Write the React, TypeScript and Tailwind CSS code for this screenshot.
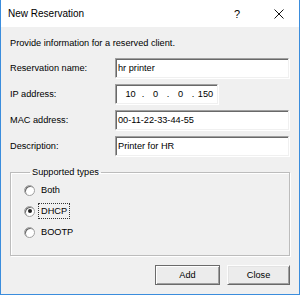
import React from "react";

const inputCls =
  "h-[20px] bg-white border border-t-[#a0a0a0] border-l-[#a0a0a0] border-r-[#f0f0f0] border-b-[#f0f0f0] shadow-[inset_1px_1px_0_#696969,1px_1px_0_white] flex items-center pl-[2px]";

function Row({ label, children }: { label: string; children: React.ReactNode }) {
  return (
    <div className="flex items-center h-[20px]">
      <div className="w-[105px]">{label}</div>
      {children}
    </div>
  );
}

function Radio({ checked }: { checked?: boolean }) {
  return (
    <div className="w-[11px] h-[11px] rounded-full bg-white border border-[#a0a0a0] shadow-[inset_1px_1px_0_#696969] flex items-center justify-center">
      {checked && <div className="w-[4px] h-[4px] rounded-full bg-[#222]" />}
    </div>
  );
}

export default function App() {
  return (
    <div className="w-[300px] h-[295px] flex flex-col bg-[#f0f0f0] border-x border-b border-[#3b8ddd] font-['Liberation_Sans',Arial,sans-serif] text-[9.2px] text-black leading-[12px]">
      <div className="h-[27px] bg-white flex items-center pl-[7px] shrink-0">
        <span className="text-[10px]">New Reservation</span>
        <span className="ml-auto text-[11px] w-[12px] text-center mr-[31px]">?</span>
        <svg width="10" height="10" viewBox="0 0 10 10" className="mr-[15px]">
          <path d="M0.5 0.5 L9.5 9.5 M9.5 0.5 L0.5 9.5" stroke="#111" strokeWidth="1" />
        </svg>
      </div>
      <div className="flex flex-col pl-[9px] pr-[9px] pt-[10px]">
        <div>Provide information for a reserved client.</div>
        <div className="flex flex-col gap-[6px] mt-[9px]">
          <Row label="Reservation name:">
            <div className={`${inputCls} w-[174px]`}>hr printer</div>
          </Row>
          <Row label="IP address:">
            <div className={`${inputCls} w-[103px] pl-[5px]`}>
              <span className="w-[19px] text-center">10</span>
              <span className="w-[6px] text-center">.</span>
              <span className="w-[19px] text-center">0</span>
              <span className="w-[6px] text-center">.</span>
              <span className="w-[19px] text-center">0</span>
              <span className="w-[6px] text-center">.</span>
              <span className="w-[19px] text-center">150</span>
            </div>
          </Row>
          <Row label="MAC address:">
            <div className={`${inputCls} w-[174px]`}>00-11-22-33-44-55</div>
          </Row>
          <Row label="Description:">
            <div className={`${inputCls} w-[174px]`}>Printer for HR</div>
          </Row>
        </div>
        <fieldset className="mt-[10px] h-[90px] border border-[#bcbcbc] shadow-[1px_1px_0_white,inset_1px_1px_0_white] pl-[13px]">
          <legend className="ml-[6px] px-[2px]">Supported types</legend>
          <div className="flex flex-col gap-[7px] mt-[5px]">
            <div className="flex items-center h-[14px]">
              <Radio />
              <span className="ml-[5px] px-[1px]">Both</span>
            </div>
            <div className="flex items-center h-[14px]">
              <Radio checked />
              <span className="ml-[3px] px-[2px] py-[1px] border border-dotted border-[#333]">DHCP</span>
            </div>
            <div className="flex items-center h-[14px]">
              <Radio />
              <span className="ml-[5px] px-[1px]">BOOTP</span>
            </div>
          </div>
        </fieldset>
        <div className="flex justify-end gap-[7px] mt-[9px]">
          <div className="w-[65px] h-[20px] border border-[#6b6b6b] bg-[#ececec] shadow-[inset_1px_1px_0_white,inset_-1px_-1px_0_#a0a0a0] flex items-center justify-center">
            Add
          </div>
          <div className="w-[63px] h-[20px] border border-t-[#fdfdfd] border-l-[#fdfdfd] border-r-[#696969] border-b-[#696969] bg-[#ececec] shadow-[inset_1px_1px_0_#e3e3e3,inset_-1px_-1px_0_#a0a0a0] flex items-center justify-center">
            Close
          </div>
        </div>
      </div>
    </div>
  );
}
